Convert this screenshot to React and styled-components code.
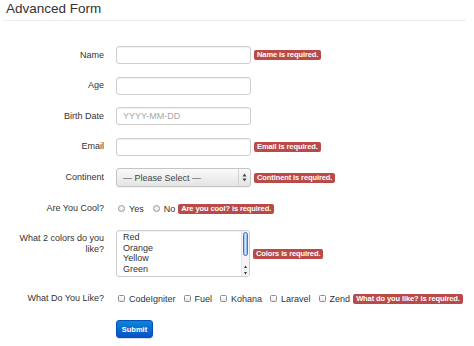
import React from "react";
import styled, { createGlobalStyle } from "styled-components";

const Global = createGlobalStyle`
  html, body { margin: 0; padding: 0; background: #fff; }
  body { font-family: "Liberation Sans", Arial, sans-serif; color: #333; }
`;

const Page = styled.div`
  width: 474px;
  height: 346px;
  overflow: hidden;
`;

const Header = styled.div`
  margin: 0 8px 0 3px;
  padding: 1px 0 4px 3px;
  border-bottom: 1px solid #ededed;
  h1 {
    margin: 0;
    font-size: 13.5px;
    font-weight: normal;
    color: #333;
    line-height: 15px;
  }
`;

const Form = styled.form`
  display: flex;
  flex-direction: column;
  gap: 12.5px;
  padding-top: 25px;
`;

const Row = styled.div`
  display: flex;
  min-height: 18px;
  align-items: ${(p) => (p.$top ? "flex-start" : "center")};
  gap: 12px;
`;

const Label = styled.label`
  width: 88px;
  margin-left: 16px;
  text-align: right;
  font-size: 9px;
  line-height: 11px;
  color: #333;
  padding-top: ${(p) => (p.$top ? "3px" : "0")};
`;

const Control = styled.div`
  display: flex;
  align-items: center;
  gap: 3px;
`;

const TextInput = styled.input`
  box-sizing: border-box;
  width: 135px;
  height: 18px;
  border: 1px solid #cfcfcf;
  border-radius: 3px;
  box-shadow: inset 0 1px 1px rgba(0, 0, 0, 0.06);
  padding: 0 6px;
  font-family: "Liberation Sans", Arial, sans-serif;
  font-size: 9px;
  color: #555;
  outline: none;
  &::placeholder { color: #a8a8a8; }
`;

const Badge = styled.span`
  display: inline-block;
  background: #b94a48;
  color: #fff;
  font-weight: bold;
  font-size: 7.5px;
  line-height: 10px;
  padding: 0 3px;
  border-radius: 2px;
  white-space: nowrap;
  letter-spacing: -0.1px;
`;

const SelectBox = styled.div`
  box-sizing: border-box;
  width: 135px;
  height: 19px;
  display: flex;
  align-items: center;
  border: 1px solid #c4c4c4;
  border-radius: 3px;
  background: linear-gradient(#fafafa, #e4e4e4);
  box-shadow: 0 1px 1px rgba(0, 0, 0, 0.05);
  font-size: 9px;
  color: #444;
`;

const SelectText = styled.span`
  flex: 1;
  padding-left: 6px;
`;

const SelectArrow = styled.span`
  width: 11px;
  height: 100%;
  display: flex;
  align-items: center;
  justify-content: center;
  border-left: 1px solid #d4d4d4;
`;

const Choice = styled.label`
  display: inline-flex;
  align-items: center;
  gap: 4px;
  font-size: 9px;
  color: #333;
  margin-left: ${(p) => p.$lead || "0"};
  margin-right: ${(p) => p.$gap || "5px"};
`;

const Radio = styled.span`
  box-sizing: border-box;
  width: 7px;
  height: 7px;
  border-radius: 50%;
  border: 1px solid #9a9a9a;
  background: radial-gradient(circle at 50% 40%, #fff, #d8d8d8);
`;

const Check = styled.span`
  box-sizing: border-box;
  width: 7px;
  height: 7px;
  border-radius: 1.5px;
  border: 1px solid #8e8e8e;
  background: linear-gradient(#fff, #e6e6e6);
`;

const ListBox = styled.div`
  box-sizing: border-box;
  width: 134px;
  height: 47px;
  display: flex;
  border: 1px solid #cfcfcf;
  border-radius: 3px;
  box-shadow: inset 0 1px 1px rgba(0, 0, 0, 0.06);
  overflow: hidden;
`;

const Options = styled.div`
  flex: 1;
  padding: 1px 6px;
  font-size: 9px;
  line-height: 10.5px;
  color: #333;
`;

const ScrollBar = styled.div`
  width: 7px;
  display: flex;
  flex-direction: column;
  align-items: center;
  padding: 1px 0 1px;
  background: #f4f4f4;
  border-left: 1px solid #e6e6e6;
`;

const Thumb = styled.div`
  width: 5px;
  height: 24px;
  border-radius: 3px;
  border: 1px solid #3d78c7;
  box-sizing: border-box;
  background: linear-gradient(90deg, #8fbaf0, #cfe3fb 50%, #7eaae6);
`;

const Track = styled.div`
  flex: 1;
`;

const Submit = styled.button`
  margin-left: 116px;
  width: 37px;
  height: 18px;
  border: 1px solid #0650b8;
  border-radius: 3px;
  background: linear-gradient(#0b86d9, #0553c7);
  color: #fff;
  font-family: "Liberation Sans", Arial, sans-serif;
  font-weight: bold;
  font-size: 7.5px;
  padding: 0;
  box-shadow: 0 1px 1px rgba(0, 0, 0, 0.15);
`;

const UpDown = () => (
  <svg width="5" height="9" viewBox="0 0 5 9">
    <path d="M2.5 0.5 L4.5 3.5 L0.5 3.5 Z" fill="#444" />
    <path d="M2.5 8.5 L4.5 5.5 L0.5 5.5 Z" fill="#444" />
  </svg>
);

const SmallArrows = () => (
  <svg width="5" height="10" viewBox="0 0 5 10">
    <path d="M2.5 0.5 L4 3 L1 3 Z" fill="#333" />
    <path d="M2.5 9.5 L4 7 L1 7 Z" fill="#333" />
  </svg>
);

export default function App() {
  return (
    <Page>
      <Global />
      <Header>
        <h1>Advanced Form</h1>
      </Header>
      <Form onSubmit={(e) => e.preventDefault()}>
        <Row>
          <Label>Name</Label>
          <Control>
            <TextInput />
            <Badge>Name is required.</Badge>
          </Control>
        </Row>
        <Row>
          <Label>Age</Label>
          <Control>
            <TextInput />
          </Control>
        </Row>
        <Row>
          <Label>Birth Date</Label>
          <Control>
            <TextInput placeholder="YYYY-MM-DD" />
          </Control>
        </Row>
        <Row>
          <Label>Email</Label>
          <Control>
            <TextInput />
            <Badge>Email is required.</Badge>
          </Control>
        </Row>
        <Row>
          <Label>Continent</Label>
          <Control>
            <SelectBox>
              <SelectText>— Please Select —</SelectText>
              <SelectArrow>
                <UpDown />
              </SelectArrow>
            </SelectBox>
            <Badge>Continent is required.</Badge>
          </Control>
        </Row>
        <Row>
          <Label>Are You Cool?</Label>
          <Control>
            <Choice $lead="2px" $gap="6px">
              <Radio /> Yes
            </Choice>
            <Choice $gap="0">
              <Radio /> No
            </Choice>
            <Badge>Are you cool? is required.</Badge>
          </Control>
        </Row>
        <Row $top>
          <Label $top>What 2 colors do you like?</Label>
          <Control>
            <ListBox>
              <Options>
                <div>Red</div>
                <div>Orange</div>
                <div>Yellow</div>
                <div>Green</div>
              </Options>
              <ScrollBar>
                <Thumb />
                <Track />
                <SmallArrows />
              </ScrollBar>
            </ListBox>
            <Badge>Colors is required.</Badge>
          </Control>
        </Row>
        <Row>
          <Label>What Do You Like?</Label>
          <Control>
            <Choice $lead="2px">
              <Check /> CodeIgniter
            </Choice>
            <Choice>
              <Check /> Fuel
            </Choice>
            <Choice>
              <Check /> Kohana
            </Choice>
            <Choice>
              <Check /> Laravel
            </Choice>
            <Choice $gap="0">
              <Check /> Zend
            </Choice>
            <Badge>What do you like? is required.</Badge>
          </Control>
        </Row>
        <Row>
          <Submit type="submit">Submit</Submit>
        </Row>
      </Form>
    </Page>
  );
}
